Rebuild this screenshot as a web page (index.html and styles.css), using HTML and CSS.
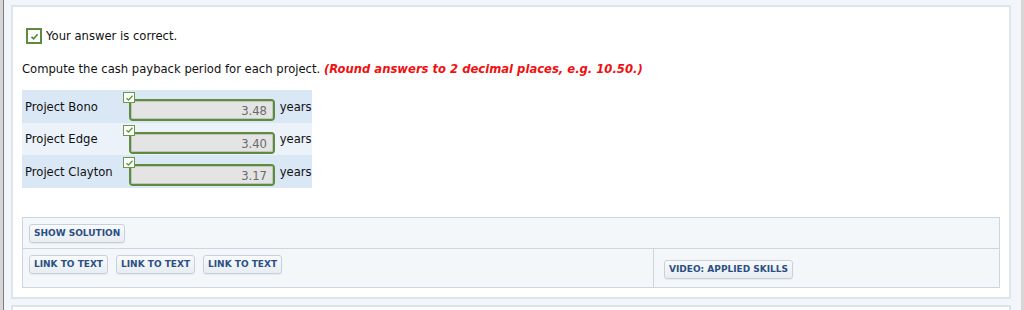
FILE: index.html
```html
<!DOCTYPE html>
<html lang="en">
<head>
    <meta charset="UTF-8">
    <title>Question Result</title>
    <link rel="stylesheet" href="styles.css">
</head>
<body>
    <div class="page">
        <div class="panel">
            <div class="result">
                <span class="check-box">
                    <svg width="11" height="11" viewBox="0 0 11 11"><path d="M2.5 5.8 L4.6 7.8 L8.6 3.2" fill="none" stroke="#4f8a2e" stroke-width="1.6"/></svg>
                </span>
                Your answer is correct.
            </div>

            <p class="question">
                Compute the cash payback period for each project.
                <em class="hint">(Round answers to 2 decimal places, e.g. 10.50.)</em>
            </p>

            <table class="answers">
                <tr class="odd">
                    <td class="label">Project Bono</td>
                    <td class="field">
                        <div class="field-wrap">
                            <span class="badge"><svg width="9" height="8" viewBox="0 0 9 8"><path d="M1.5 4.2 L3.5 6 L7.5 1.8" fill="none" stroke="#5c9a34" stroke-width="1.3"/></svg></span>
                            <div class="input-ring"><input type="text" value="3.48" readonly></div>
                        </div>
                    </td>
                    <td class="unit">years</td>
                </tr>
                <tr class="even">
                    <td class="label">Project Edge</td>
                    <td class="field">
                        <div class="field-wrap">
                            <span class="badge"><svg width="9" height="8" viewBox="0 0 9 8"><path d="M1.5 4.2 L3.5 6 L7.5 1.8" fill="none" stroke="#5c9a34" stroke-width="1.3"/></svg></span>
                            <div class="input-ring"><input type="text" value="3.40" readonly></div>
                        </div>
                    </td>
                    <td class="unit">years</td>
                </tr>
                <tr class="odd">
                    <td class="label">Project Clayton</td>
                    <td class="field">
                        <div class="field-wrap">
                            <span class="badge"><svg width="9" height="8" viewBox="0 0 9 8"><path d="M1.5 4.2 L3.5 6 L7.5 1.8" fill="none" stroke="#5c9a34" stroke-width="1.3"/></svg></span>
                            <div class="input-ring"><input type="text" value="3.17" readonly></div>
                        </div>
                    </td>
                    <td class="unit">years</td>
                </tr>
            </table>

            <div class="tools">
                <div class="tools-row">
                    <button class="btn">SHOW SOLUTION</button>
                </div>
                <div class="tools-row split">
                    <div class="links">
                        <button class="btn">LINK TO TEXT</button>
                        <button class="btn">LINK TO TEXT</button>
                        <button class="btn">LINK TO TEXT</button>
                    </div>
                    <div class="media">
                        <button class="btn">VIDEO: APPLIED SKILLS</button>
                    </div>
                </div>
            </div>
        </div>
        <div class="panel next"></div>
    </div>
</body>
</html>
```

FILE: styles.css
```css
html {
    background-color: #d6d6d6;
    overflow: hidden;
}

body {
    margin: 0;
    font-family: "DejaVu Sans", Verdana, sans-serif;
    font-size: 11.6px;
    line-height: 14px;
    color: #111;
    height: 310px;
    overflow: hidden;
}

.page {
    box-sizing: border-box;
    margin: 0 3px;
    border-left: 1px solid #7c7c7c;
    background-color: #f2f6fa;
    padding: 5px 10px 0 7px;
    height: 310px;
    overflow: hidden;
}

.panel {
    background-color: #fff;
    border: 2px solid #dde4ec;
    padding: 21px 9px 9px 9px;
    height: 260px;
}

.panel.next {
    margin-top: 6px;
    height: 40px;
}

.result {
    display: flex;
    align-items: center;
    gap: 4px;
    margin-left: 4px;
}

.check-box {
    display: inline-flex;
    align-items: center;
    justify-content: center;
    width: 12px;
    height: 12px;
    border: 2px solid #5d8c3f;
    background-color: #fff;
}

.question {
    margin: 18px 0 14px 0;
}

.hint {
    color: #f01010;
    font-weight: bold;
}

.answers {
    border-collapse: collapse;
    width: 290px;
}

.answers td {
    padding: 0;
    vertical-align: middle;
}

.answers tr.odd {
    background-color: #dae7f5;
    height: 33px;
}

.answers tr.even {
    background-color: #ebf2fa;
    height: 32px;
}

.answers .label {
    width: 98px;
    padding-left: 3px;
}

.answers .unit {
    padding-left: 3px;
}

.field-wrap {
    position: relative;
    padding: 7px 0 0 6px;
    width: 146px;
}

.badge {
    position: absolute;
    top: 0;
    left: 0;
    width: 10px;
    height: 9px;
    border: 1px solid #6a9a48;
    background-color: #fff;
    display: flex;
    align-items: center;
    justify-content: center;
}

.input-ring {
    border: 2px solid #5d8c3c;
    border-radius: 4px;
    height: 18px;
    background-color: #fff;
}

.input-ring input {
    box-sizing: border-box;
    width: 100%;
    height: 18px;
    margin: 0;
    border: 1px solid #c4c4c4;
    border-radius: 2px;
    background-color: #e4e4e4;
    color: #6a6a6a;
    text-align: right;
    font-family: "DejaVu Sans", Verdana, sans-serif;
    font-size: 11.6px;
    padding: 2px 5px 0 0;
}

.tools {
    margin-top: 29px;
    border: 1px solid #ccd6e0;
    background-color: #f4f7fa;
}

.tools-row {
    padding: 6px 6px 5px 6px;
}

.tools-row.split {
    display: flex;
    padding: 0;
    border-top: 1px solid #ccd6e0;
}

.links {
    width: 618px;
    padding: 6px 6px 13px 6px;
    display: flex;
    gap: 8px;
    border-right: 1px solid #ccd6e0;
}

.media {
    display: flex;
    align-items: center;
    padding: 2px 10px 0 10px;
}

.btn {
    font-family: "DejaVu Sans", Verdana, sans-serif;
    font-size: 9px;
    font-weight: bold;
    color: #2b4f82;
    background: linear-gradient(#f8fafc, #e8edf2);
    border: 1px solid #c8d1db;
    border-radius: 3px;
    padding: 3px 4px;
    line-height: 11px;
    box-shadow: 0 1px 1px rgba(0, 0, 0, 0.06);
    cursor: pointer;
}
```
